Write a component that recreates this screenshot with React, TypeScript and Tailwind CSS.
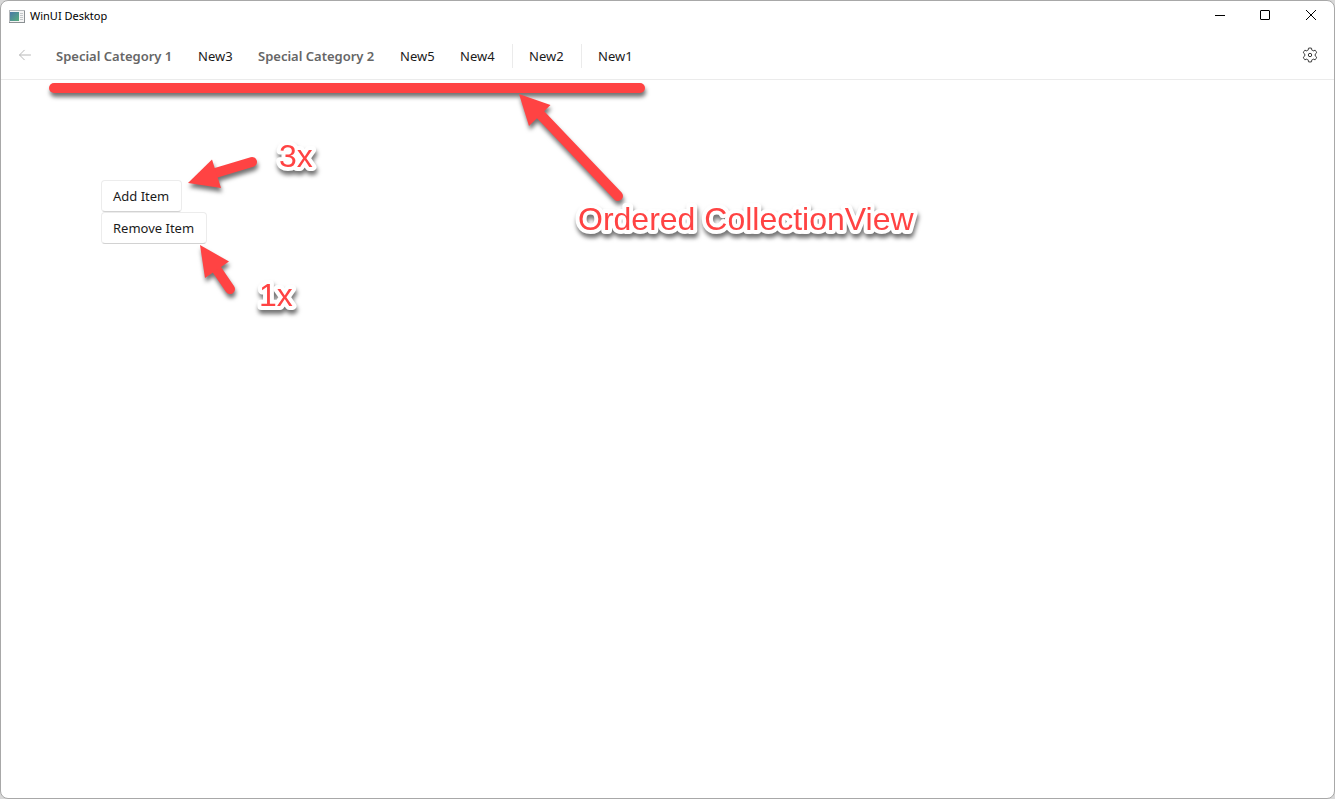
import type { ReactNode } from 'react';

type NavEntry =
  | { kind: 'header'; label: string }
  | { kind: 'item'; label: string }
  | { kind: 'separator' };

const entries: NavEntry[] = [
  { kind: 'header', label: 'Special Category 1' },
  { kind: 'item', label: 'New3' },
  { kind: 'header', label: 'Special Category 2' },
  { kind: 'item', label: 'New5' },
  { kind: 'item', label: 'New4' },
  { kind: 'separator' },
  { kind: 'item', label: 'New2' },
  { kind: 'separator' },
  { kind: 'item', label: 'New1' },
];

function AppIcon() {
  return (
    <svg width="16" height="13" viewBox="0 0 16 13" aria-hidden="true">
      <defs>
        <linearGradient id="pane" x1="0" y1="0" x2="1" y2="1">
          <stop offset="0" stopColor="#4a78a8" />
          <stop offset="1" stopColor="#58ad7c" />
        </linearGradient>
      </defs>
      <rect x="0.5" y="0.5" width="15" height="12" fill="#f4f4f4" stroke="#b4b8bb" />
      <path d="M0 12.5h16M15.5 1v12" stroke="#8b9093" />
      <rect x="1" y="2" width="9" height="9" fill="url(#pane)" />
      <path d="M11 3.5h3M11 5.5h3M11 7.5h3M11 9.5h3" stroke="#c3c7c9" />
    </svg>
  );
}

function TitleBar() {
  return (
    <header className="flex h-[31px] items-start">
      <div className="flex flex-1 items-center gap-[5px] pt-1.5 pl-2">
        <AppIcon />
        <h1 className="text-[11px] leading-[18px] text-black">WinUI Desktop</h1>
      </div>
      <div className="flex h-7 text-black">
        <button type="button" aria-label="Minimize" className="flex w-11 items-center justify-center">
          <svg width="10" height="10" viewBox="0 0 10 10"><path d="M0 5.5h10" stroke="currentColor" /></svg>
        </button>
        <button type="button" aria-label="Maximize" className="flex w-[46px] items-center justify-center">
          <svg width="10" height="10" viewBox="0 0 10 10"><rect x="0.5" y="0.5" width="9" height="9" rx="0.5" fill="none" stroke="currentColor" /></svg>
        </button>
        <button type="button" aria-label="Close" className="flex w-[46px] items-center justify-center">
          <svg width="10" height="10" viewBox="0 0 10 10"><path d="M0 0l10 10M10 0L0 10" stroke="currentColor" /></svg>
        </button>
      </div>
    </header>
  );
}

function GearIcon() {
  return (
    <svg width="16" height="16" viewBox="0 0 16 16" fill="none" stroke="#3a3a3a" strokeWidth="1" strokeLinejoin="round" aria-hidden="true">
      <path d="M6.5 1.2Q8 .8 9.5 1.2L9.9 3.2Q10.6 3.5 11.2 3.9L13.1 3.2Q14.2 4.3 14.7 5.8L13.2 7.1Q13.3 8 13.2 8.9L14.7 10.2Q14.2 11.7 13.1 12.8L11.2 12.1Q10.6 12.5 9.9 12.8L9.5 14.8Q8 15.2 6.5 14.8L6.1 12.8Q5.4 12.5 4.8 12.1L2.9 12.8Q1.8 11.7 1.3 10.2L2.8 8.9Q2.7 8 2.8 7.1L1.3 5.8Q1.8 4.3 2.9 3.2L4.8 3.9Q5.4 3.5 6.1 3.2Z" />
      <circle cx="8" cy="8" r="1.7" />
    </svg>
  );
}

function NavBar() {
  return (
    <nav className="flex h-12 items-center border-b border-[#ebebeb] text-[13px] leading-5">
      <button type="button" disabled aria-label="Back" className="ml-1 flex h-[46px] w-[39px] items-center justify-center self-start">
        <svg width="12" height="12" viewBox="0 0 12 12" fill="none" stroke="#b8b8b8" strokeLinecap="round" strokeLinejoin="round">
          <path d="M11.5 6H.7M5.3 1.2L.5 6l4.800 4.800" />
        </svg>
      </button>
      <ul className="flex flex-1 items-center">
        {entries.map((entry, i) => {
          if (entry.kind === 'separator') {
            return <li key={i} role="separator" className="mx-1 h-6 w-px bg-[#ebebeb]" />;
          }
          if (entry.kind === 'header') {
            return (
              <li key={i} className="w-[142px] px-3 font-semibold whitespace-nowrap text-[#666666]">
                {entry.label}
              </li>
            );
          }
          return (
            <li key={i}>
              <button type="button" className="w-[60px] px-3 text-left text-[#1b1b1b]">{entry.label}</button>
            </li>
          );
        })}
      </ul>
      <button type="button" aria-label="Settings" className="flex h-[46px] w-12 items-center justify-center self-start">
        <GearIcon />
      </button>
    </nav>
  );
}

function ActionButton({ children }: { children: ReactNode }) {
  return (
    <button
      type="button"
      className="h-8 rounded-[4px] border border-[#ececec] border-b-[#d2d2d2] bg-white pr-3 pl-[11px] text-[13px] leading-5 text-[#1b1b1b]"
    >
      {children}
    </button>
  );
}

function Annotations() {
  return (
    <svg
      className="pointer-events-none absolute -top-px -left-px drop-shadow-[1px_4px_2px_rgba(0,0,0,0.55)]"
      width="940"
      height="330"
      viewBox="0 0 940 330"
      fill="#ff4343"
      strokeLinecap="round"
      strokeLinejoin="round"
    >
      <g stroke="#ff4343" strokeWidth="10">
        <path d="M54 88H640" />
        <path d="M538 112L618 196" />
        <path d="M212 174L252 162" />
        <path d="M215 267L230 289" />
      </g>
      <path d="M519 94L550.5 105L529 126Z" />
      <path d="M188 183L212 159.5L221 188Z" />
      <path d="M200 245L229 261.5L205 278Z" />
      <g
        className="font-['Liberation_Sans',Arial,sans-serif] text-[32px] [paint-order:stroke_fill]"
        stroke="white"
        strokeWidth="8"
      >
        <text x="279" y="167">3x</text>
        <text x="259" y="306">1x</text>
        <text x="578" y="230">Ordered CollectionView</text>
      </g>
    </svg>
  );
}

export default function App() {
  return (
    <div className="min-h-screen bg-[#d8d8d8] font-['Noto_Sans','Open_Sans',sans-serif]">
      <div className="relative flex min-h-screen flex-col rounded-lg border border-[#a8a8a8] bg-white">
        <TitleBar />
        <NavBar />
        <main className="flex flex-1 flex-col items-start px-[100px] pt-[100px]">
          <ActionButton>Add Item</ActionButton>
          <ActionButton>Remove Item</ActionButton>
        </main>
        <Annotations />
      </div>
    </div>
  );
}
